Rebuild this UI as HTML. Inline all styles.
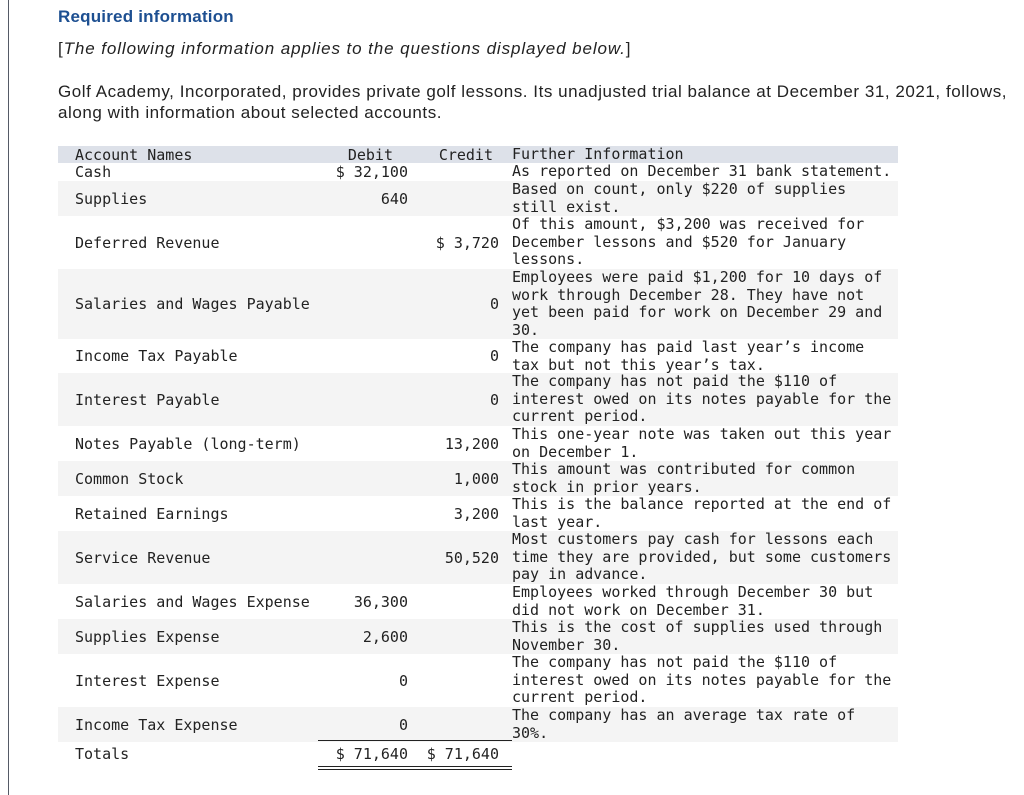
<!DOCTYPE html>
<html><head><meta charset="utf-8"><style>
body{margin:0;width:1024px;height:795px;background:#fff;position:relative;overflow:hidden;font-family:"Liberation Sans",sans-serif;color:#222}
.vl{position:absolute;left:8px;top:0;width:1px;height:795px;background:#555a66}
.t{position:absolute;left:58px;white-space:nowrap;font-size:17px;letter-spacing:0.55px}
.row{position:absolute;left:58px;width:840px;font-family:"DejaVu Sans Mono",monospace;font-size:15px;color:#222}
.g{background:#f4f4f4}
.h{background:#dde1e9}
.c{position:absolute;top:0;bottom:0;display:flex;align-items:center;white-space:pre}
.a{left:17px}
.d{right:490px}
.cr{right:399px}
.f{position:absolute;left:454px;top:0px;line-height:17.5px;white-space:pre}
</style></head><body>
<div class="vl"></div>
<div class="t" style="top:7px;color:#1d4f91;font-weight:bold;letter-spacing:0.2px">Required information</div>
<div class="t" style="top:39px;letter-spacing:0.9px">[<i>The following information applies to the questions displayed below.</i>]</div>
<div class="t" style="top:81px;line-height:21px">Golf Academy, Incorporated, provides private golf lessons. Its unadjusted trial balance at December 31, 2021, follows,<br>along with information about selected accounts.</div>

<div class="row h" style="top:146px;height:17px"><span class="c a">Account Names</span><span class="c" style="right:505px">Debit</span><span class="c" style="right:405px">Credit</span><span class="f">Further Information</span></div>
<div class="row" style="top:163px;height:18px"><span class="c a">Cash</span><span class="c d">$ 32,100</span><span class="f">As reported on December 31 bank statement.</span></div>
<div class="row g" style="top:181px;height:35px"><span class="c a">Supplies</span><span class="c d">640</span><span class="f">Based on count, only $220 of supplies
still exist.</span></div>
<div class="row" style="top:216px;height:53px"><span class="c a">Deferred Revenue</span><span class="c cr">$ 3,720</span><span class="f">Of this amount, $3,200 was received for
December lessons and $520 for January
lessons.</span></div>
<div class="row g" style="top:269px;height:70px"><span class="c a">Salaries and Wages Payable</span><span class="c cr">0</span><span class="f">Employees were paid $1,200 for 10 days of
work through December 28. They have not
yet been paid for work on December 29 and
30.</span></div>
<div class="row" style="top:339px;height:34px"><span class="c a">Income Tax Payable</span><span class="c cr">0</span><span class="f">The company has paid last year’s income
tax but not this year’s tax.</span></div>
<div class="row g" style="top:373px;height:53px"><span class="c a">Interest Payable</span><span class="c cr">0</span><span class="f">The company has not paid the $110 of
interest owed on its notes payable for the
current period.</span></div>
<div class="row" style="top:426px;height:35px"><span class="c a">Notes Payable (long-term)</span><span class="c cr">13,200</span><span class="f">This one-year note was taken out this year
on December 1.</span></div>
<div class="row g" style="top:461px;height:35px"><span class="c a">Common Stock</span><span class="c cr">1,000</span><span class="f">This amount was contributed for common
stock in prior years.</span></div>
<div class="row" style="top:496px;height:35px"><span class="c a">Retained Earnings</span><span class="c cr">3,200</span><span class="f">This is the balance reported at the end of
last year.</span></div>
<div class="row g" style="top:531px;height:53px"><span class="c a">Service Revenue</span><span class="c cr">50,520</span><span class="f">Most customers pay cash for lessons each
time they are provided, but some customers
pay in advance.</span></div>
<div class="row" style="top:584px;height:35px"><span class="c a">Salaries and Wages Expense</span><span class="c d">36,300</span><span class="f">Employees worked through December 30 but
did not work on December 31.</span></div>
<div class="row g" style="top:619px;height:35px"><span class="c a">Supplies Expense</span><span class="c d">2,600</span><span class="f">This is the cost of supplies used through
November 30.</span></div>
<div class="row" style="top:654px;height:53px"><span class="c a">Interest Expense</span><span class="c d">0</span><span class="f">The company has not paid the $110 of
interest owed on its notes payable for the
current period.</span></div>
<div class="row g" style="top:707px;height:35px"><span class="c a">Income Tax Expense</span><span class="c d">0</span><span class="f">The company has an average tax rate of
30%.</span></div>
<div style="position:absolute;left:318px;top:740px;width:194px;height:1px;background:#222"></div>
<div class="row" style="top:742px;height:24px"><span class="c a">Totals</span><span class="c d">$ 71,640</span><span class="c cr">$ 71,640</span></div>
<div style="position:absolute;left:318px;top:766px;width:194px;height:1px;background:#222"></div>
<div style="position:absolute;left:318px;top:769px;width:194px;height:1px;background:#222"></div>
</body></html>
